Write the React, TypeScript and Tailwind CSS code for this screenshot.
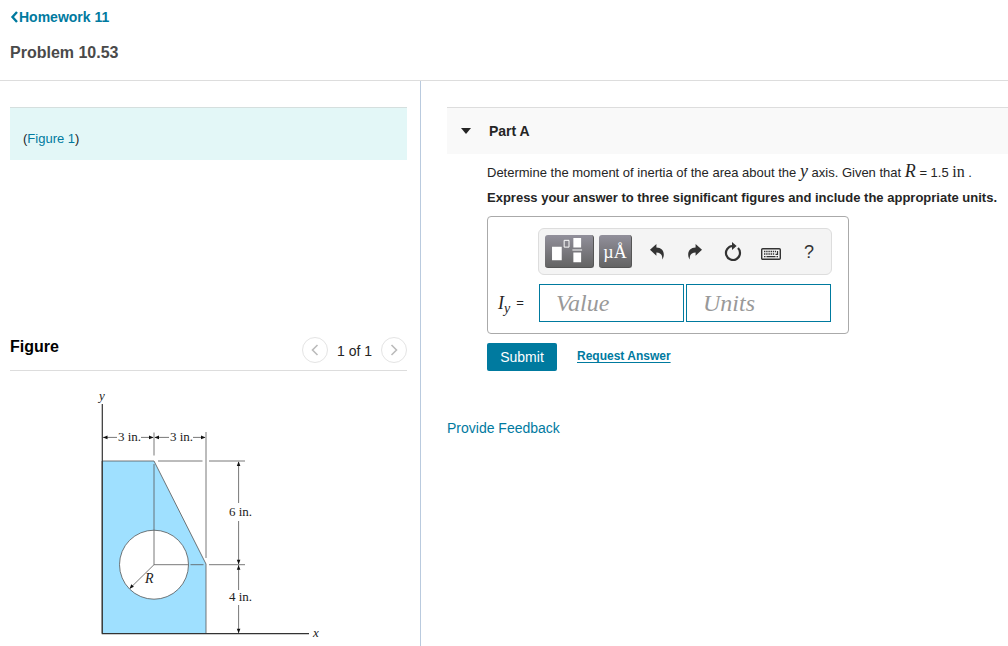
import { useState } from "react";

const serif = "font-['Liberation_Serif',serif]";

function FigureDrawing() {
  return (
    <svg
      viewBox="90 385 240 261"
      role="img"
      aria-label="Shaded area with a circular hole of radius R"
      className="ml-20 mt-3.5 block w-[240px]"
      fill="none"
      stroke="#555"
      strokeWidth="0.8"
    >
      <path
        d="M102 461H154L206 564V633.5H102Z"
        fill="#9fe0ff"
        stroke="#555"
      />
      <circle cx="154" cy="564.7" r="34.5" fill="#fff" />
      {/* axes */}
      <path d="M102.3 404V633.7H309" stroke="#333" strokeWidth="1.2" />
      {/* extension lines */}
      <path d="M154 432.5V455.5M206 432V558M158 461H202.5M209 461H245M209 564.7H245" />
      <path d="M154 464V564.7H188.5M190.5 564.7H203.5M154 564.7L130 588.3" />
      {/* dimension lines */}
      <path d="M103 437.4H117M141 437.4H153M155 437.4H169M193 437.4H205" />
      <path d="M238.6 462V503M238.6 521V564M238.6 565V590M238.6 605V633" />
      <g fill="#111" stroke="none">
        <path d="M103 437.4l4.5-1.8v3.6zM153.5 437.4l-4.5-1.8v3.6zM154.5 437.4l4.5-1.8v3.6zM205.5 437.4l-4.5-1.8v3.6z" />
        <path d="M238.6 461.5l-1.8 4.5h3.6zM238.6 564.2l-1.8-4.5h3.6zM238.6 565.2l-1.8 4.5h3.6zM238.6 633.2l-1.8-4.5h3.6z" />
        <path d="M129.6 588.7l1.7-4.5 2.6 2.6z" />
      </g>
      <g fill="#222" stroke="none" className={`${serif} text-[13px]`}>
        <text x="118" y="441">3 in.</text>
        <text x="170" y="441">3 in.</text>
        <text x="229" y="516">6 in.</text>
        <text x="229" y="601">4 in.</text>
        <g className="italic">
          <text x="99" y="400">y</text>
          <text x="313" y="637">x</text>
          <text x="145" y="583" className="text-[14px]">R</text>
        </g>
      </g>
    </svg>
  );
}

function TemplateIcon() {
  return (
    <svg viewBox="0 0 49 33" className="h-full w-full" fill="#fff">
      <path d="M7 12h10v14H7zM29 3h8v10h-8zM28 15h10v1H28zM29 18h8v10h-8z" />
      <path d="M19.5 5.5h5v7h-5z" fill="none" stroke="#fff" />
    </svg>
  );
}

function ArrowIcon({ flip = false }: { flip?: boolean }) {
  return (
    <svg
      viewBox="0 0 14 16"
      className={flip ? "h-4 w-3.5 -scale-x-100" : "h-4 w-3.5"}
      fill="#333"
    >
      <path d="M0 5.8L6.4 0v3.4c4.7.1 7.4 2.9 7.4 7 0 2-.6 3.8-1.6 5.1.5-4.3-1.5-6.9-5.8-7v3.3z" />
    </svg>
  );
}

function ResetIcon() {
  return (
    <svg viewBox="0 0 18 20" className="h-5 w-[18px]">
      <path
        d="M14 6.1A7 7 0 1 1 8.4 4"
        fill="none"
        stroke="#333"
        strokeWidth="2.2"
      />
      <path d="M8 0l4.6 4-4.6 4z" fill="#333" />
    </svg>
  );
}

function KeyboardIcon() {
  return (
    <svg viewBox="0 0 20 12" className="h-3 w-5" fill="none" stroke="#333">
      <rect x="0.7" y="0.7" width="18.6" height="10.6" rx="1" strokeWidth="1.4" />
      <path d="M3 3.5h12M3 6h11" strokeWidth="1.3" strokeDasharray="1.4 0.8" />
      <path d="M3 8.7h1.5M5.5 8.7h9M15.5 8.7H17M16.5 3v3.3h-2" strokeWidth="1.2" />
    </svg>
  );
}

function AnswerBox() {
  const [value, setValue] = useState("");
  const [units, setUnits] = useState("");
  const field = `h-[38px] w-[145px] border border-[#007a9f] bg-white px-4 text-2xl italic text-[#333] placeholder:text-[#999] focus:outline-none ${serif}`;
  const dark =
    "h-[33px] rounded-[3px] bg-linear-to-b from-[#92909b] to-[#646464] border-r border-b border-[#555]";
  const tool = "flex h-8 w-6 items-center justify-center";

  return (
    <div className="mt-2 w-[362px] rounded-[4px] border border-[#aaa] pb-[11px] pl-[50px] pr-4 pt-[11px]">
      <div className="flex h-[47px] items-center rounded-[6px] border border-[#ddd] bg-[#f4f4f4] pl-1.5">
        <button type="button" aria-label="Templates" className={`${dark} w-[49px]`}>
          <TemplateIcon />
        </button>
        <button
          type="button"
          aria-label="Units"
          className={`${dark} ${serif} ml-[5px] w-[33px] pt-0.5 text-lg leading-none text-white`}
        >
          µÅ
        </button>
        <div className="ml-[13px] flex gap-[14px]">
          <button type="button" aria-label="Undo" className={tool}>
            <ArrowIcon />
          </button>
          <button type="button" aria-label="Redo" className={tool}>
            <ArrowIcon flip />
          </button>
          <button type="button" aria-label="Reset" className={tool}>
            <ResetIcon />
          </button>
          <button type="button" aria-label="Keyboard shortcuts" className={`${tool} pt-1`}>
            <KeyboardIcon />
          </button>
          <button type="button" aria-label="Help" className={`${tool} text-lg text-[#333]`}>
            ?
          </button>
        </div>
      </div>
      <div className="-ml-10 mt-[9px] flex items-center">
        <label
          htmlFor="value"
          className="flex w-[41px] shrink-0 items-center gap-1.5 text-[13px]"
        >
          <span className={`${serif} text-lg italic leading-6`}>
            I<sub className="text-sm">y</sub>
          </span>
          <span>=</span>
        </label>
        <div className="flex gap-0.5">
          <input
            id="value"
            placeholder="Value"
            value={value}
            onChange={(e) => setValue(e.target.value)}
            className={field}
          />
          <input
            aria-label="Units"
            placeholder="Units"
            value={units}
            onChange={(e) => setUnits(e.target.value)}
            className={field}
          />
        </div>
      </div>
    </div>
  );
}

export default function App() {
  const pager =
    "flex size-[26px] items-center justify-center rounded-full border border-[#e4e4e4]";

  return (
    <div className="flex min-h-screen flex-col overflow-x-hidden bg-white font-['Liberation_Sans',Arial,sans-serif] text-[13px] text-[#252525]">
      <header className="border-b border-[#ddd] px-2.5 pb-[15px] pt-[7px]">
        <a href="#homework" className="flex items-center text-sm font-bold text-[#007a9f]">
          <svg viewBox="0 0 9 12" className="h-3 w-[9px]" fill="none" stroke="currentColor" strokeWidth="2.4">
            <path d="M7 1L2.5 6 7 11" />
          </svg>
          Homework 11
        </a>
        <h1 className="mt-3.5 text-base font-bold text-[#4a4a4a]">Problem 10.53</h1>
      </header>

      <div className="flex flex-1">
        <section className="w-5/12 pl-2.5 pr-[13px] pt-[26px]">
          <div className="border-t border-[#d5dfde] bg-[#e3f7f7] px-[13px] pb-[11px] pt-[21px] leading-5">
            (
            <a href="#figure" className="text-[#007a9f]">
              Figure 1
            </a>
            )
          </div>

          <div
            id="figure"
            className="mt-[177px] flex items-start justify-between border-b border-[#ddd] pb-[7px]"
          >
            <h2 className="text-base font-bold leading-5 text-black">Figure</h2>
            <div className="flex items-center gap-[9px] text-sm">
              <button type="button" aria-label="Previous figure" className={pager}>
                <svg viewBox="0 0 8 12" className="h-3 w-2" fill="none" stroke="#bbb" strokeWidth="1.6">
                  <path d="M6.5 1l-5 5 5 5" />
                </svg>
              </button>
              <span className="pt-0.5">1 of 1</span>
              <button type="button" aria-label="Next figure" className={pager}>
                <svg viewBox="0 0 8 12" className="h-3 w-2" fill="none" stroke="#bbb" strokeWidth="1.6">
                  <path d="M1.5 1l5 5-5 5" />
                </svg>
              </button>
            </div>
          </div>
          <FigureDrawing />
        </section>

        <main className="min-w-0 flex-1 border-l border-[#b9cade] pl-[26px] pt-[26px]">
          <button
            type="button"
            className="flex h-[47px] w-full items-center border-t border-[#ddd] bg-[#f9f9f9] pl-3.5 text-sm font-bold"
          >
            <svg viewBox="0 0 10 6" className="mr-[18px] h-1.5 w-2.5" fill="#252525">
              <path d="M0 0h10L5 6z" />
            </svg>
            Part A
          </button>

          <div className="pl-10">
            <p className="mt-[7px] whitespace-nowrap leading-5">
              Determine the moment of inertia of the area about the{" "}
              <i className={`${serif} text-lg leading-5`}>y</i> axis. Given that{" "}
              <i className={`${serif} text-lg leading-5`}>R</i> = 1.5{" "}
              <span className={`${serif} text-base leading-5`}>in</span> .
            </p>
            <p className="mt-[5px] whitespace-nowrap font-bold leading-5">
              Express your answer to three significant figures and include the appropriate units.
            </p>
            <AnswerBox />
            <div className="mt-[9px] flex items-center gap-5">
              <button
                type="submit"
                className="h-7 w-[70px] rounded-[2px] bg-[#007a9f] text-sm text-white"
              >
                Submit
              </button>
              <a
                href="#answer"
                className="pb-0.5 text-xs font-bold text-[#007a9f] underline underline-offset-2"
              >
                Request Answer
              </a>
            </div>
          </div>
          <a href="#feedback" className="mt-[47px] inline-block text-sm text-[#007a9f]">
            Provide Feedback
          </a>
        </main>
      </div>
    </div>
  );
}
